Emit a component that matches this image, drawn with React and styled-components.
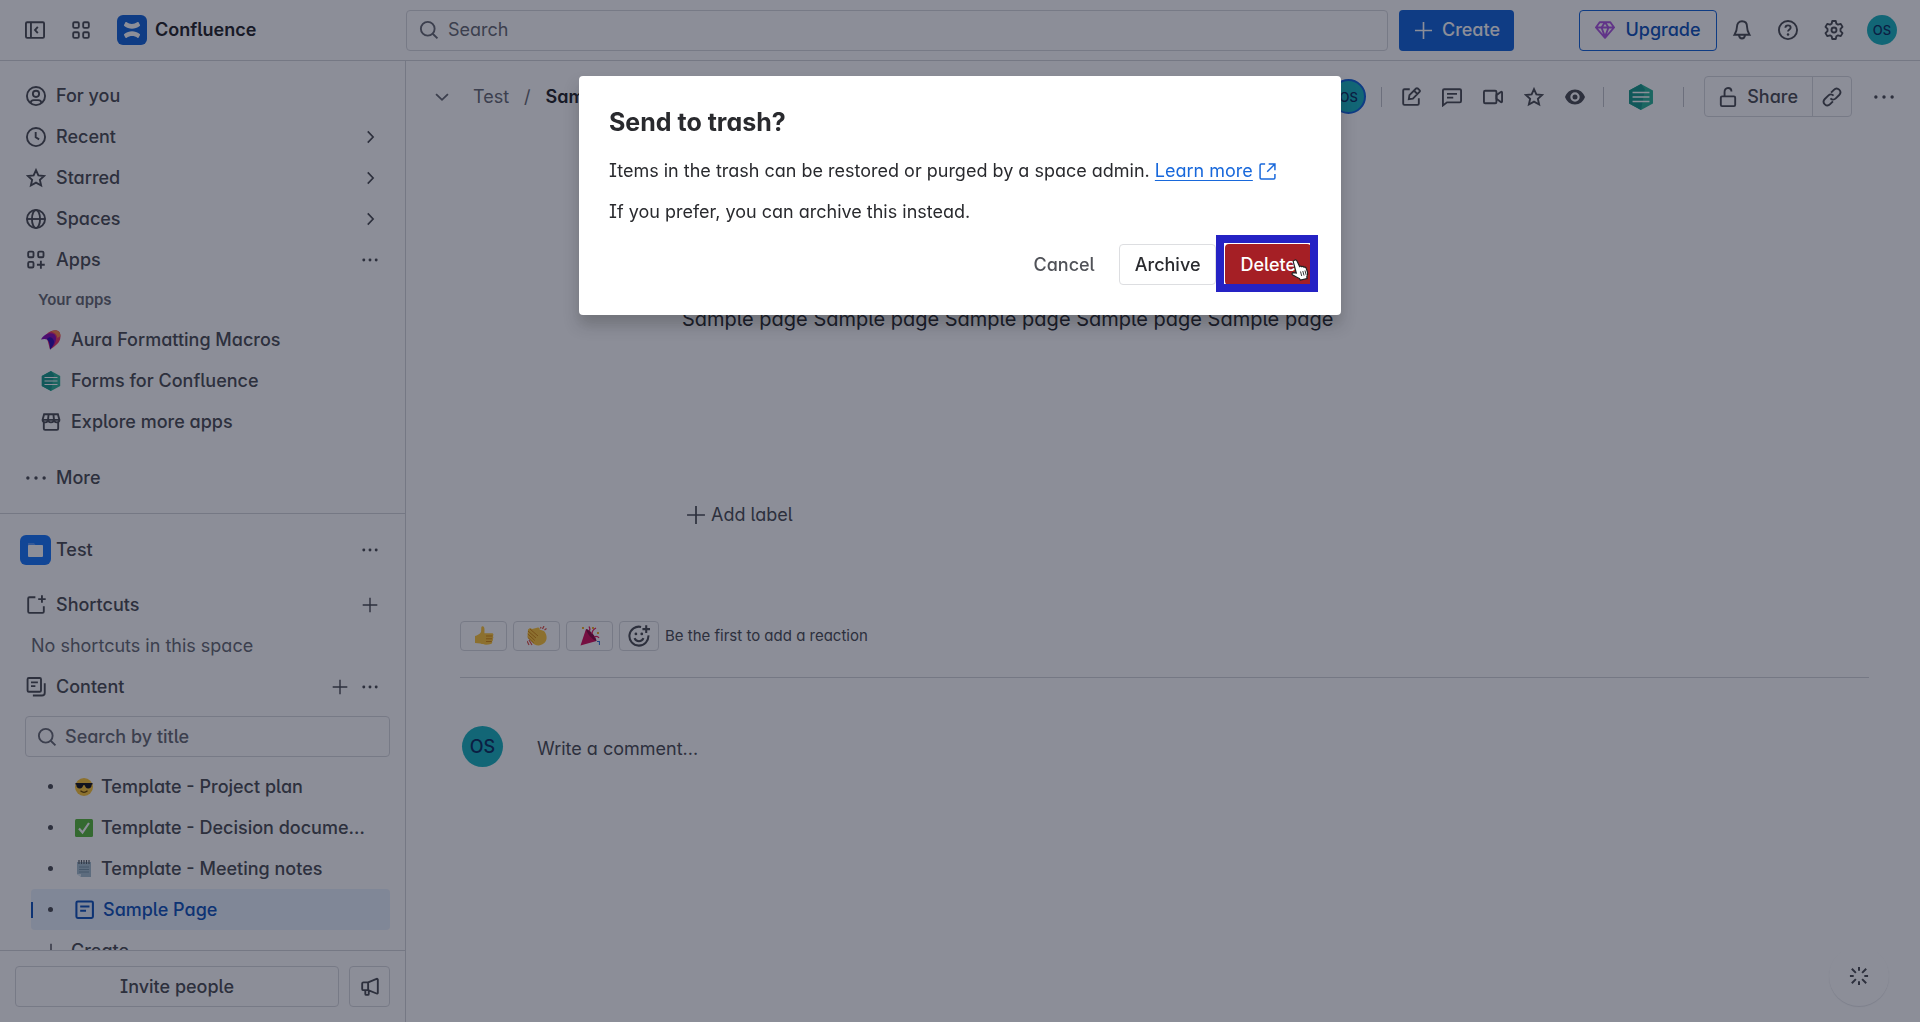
import React from 'react'
import styled, { createGlobalStyle, css } from 'styled-components'

const Icon = ({ size = 20, weight = 1.5, children }) => (
    <Svg width={size} height={size} viewBox="0 0 16 16" strokeWidth={weight} aria-hidden="true">
        {children}
    </Svg>
)

const PanelIcon = () => (
    <Icon>
        <rect x="0.75" y="1.75" width="14.5" height="12.5" rx="1" />
        <path d="M4.75 1.75v12.5M10.25 5.5 8 8l2.25 2.5" />
    </Icon>
)
const GridIcon = () => (
    <Icon>
        <rect x="1.75" y="1.75" width="4.5" height="4.5" rx="1" />
        <rect x="9.75" y="1.75" width="4.5" height="4.5" rx="1" />
        <rect x="1.75" y="9.75" width="4.5" height="4.5" rx="1" />
        <rect x="9.75" y="9.75" width="4.5" height="4.5" rx="1" />
    </Icon>
)
const PersonIcon = () => (
    <Icon>
        <circle cx="8" cy="8" r="7.25" />
        <circle cx="8" cy="6.25" r="2.5" />
        <path d="M3.75 13.6c0-1.6 1-2.35 2.5-2.35h3.5c1.5 0 2.5.75 2.5 2.35" />
    </Icon>
)
const ClockIcon = () => (
    <Icon>
        <circle cx="8" cy="8" r="7.25" />
        <path d="M7.75 4v4.25l2.75 1.65" />
    </Icon>
)
const StarIcon = () => (
    <Icon>
        <path d="m8 1.7 1.9 4.2 4.6.5-3.4 3.1 1 4.5L8 11.7 3.9 14l1-4.5L1.5 6.4l4.6-.5z" />
    </Icon>
)
const GlobeIcon = () => (
    <Icon>
        <circle cx="8" cy="8" r="7.25" />
        <ellipse cx="8" cy="8" rx="3.25" ry="7.25" />
        <path d="M.75 8h14.5" />
    </Icon>
)
const AppsIcon = () => (
    <Icon>
        <rect x="1.75" y="1.25" width="4.25" height="4.5" rx="1" />
        <rect x="9.75" y="1.25" width="4.25" height="4.5" rx="1" />
        <rect x="1.75" y="9.5" width="4.25" height="4.5" rx="1" />
        <path d="M11.9 8.5V15M8.75 11.75H15" />
    </Icon>
)
const StoreIcon = () => (
    <Icon>
        <path d="M2.25 8.25v5c0 .6.4 1 1 1h9.5c.6 0 1-.4 1-1v-5M2.5 1.75h11l1.25 4.5c0 1.2-.9 2-2.1 2s-2.25-.8-2.25-2c0 1.2-1.2 2-2.4 2s-2.4-.8-2.4-2c0 1.2-1.05 2-2.25 2s-2.1-.8-2.1-2zM5.6 6.25l.5-4.5M10.4 6.25l-.5-4.5M1.25 6.25h13.5" />
    </Icon>
)
const DotsIcon = ({ size = 20, spread = 6.5, r = 1.35 }) => (
    <Icon size={size}>
        <g fill="currentColor" stroke="none">
            <circle cx={8 - spread} cy="8" r={r} />
            <circle cx="8" cy="8" r={r} />
            <circle cx={8 + spread} cy="8" r={r} />
        </g>
    </Icon>
)
const ChevronIcon = ({ down }) => (
    <Icon size={down ? 20 : 18}>
        <path d={down ? 'm3.25 5.75 4.75 4.5 4.75-4.5' : 'M6 3l4.75 5L6 13'} />
    </Icon>
)
const PlusIcon = ({ size = 18 }) => (
    <Icon size={size} weight={1.25}>
        <path d="M8 1.5v13M1.5 8h13" />
    </Icon>
)
const ShortcutIcon = () => (
    <Icon>
        <path d="M7.5 1.75H2.75c-.6 0-1 .4-1 1v10.5c0 .6.4 1 1 1h10.5c.6 0 1-.4 1-1V9M12.75.25v6M9.75 3.25h6" />
    </Icon>
)
const PagesIcon = () => (
    <Icon>
        <rect x="1.25" y="0.75" width="10.75" height="11" rx="1" />
        <path d="M4 4.25h5.5M4 7.25h3.5M5.5 14.75h7.25c1.4 0 2.25-1 2.25-2.25V5" />
    </Icon>
)
const SearchIcon = () => (
    <Icon>
        <circle cx="7" cy="7" r="5.5" />
        <path d="m11 11 3.75 3.75" />
    </Icon>
)
const PageIcon = () => (
    <Icon size={22}>
        <rect x="1.75" y="1.75" width="12" height="12" rx="1" />
        <path d="M4.5 5.5h6.75M4.5 8.5h4.25" />
    </Icon>
)
const MegaphoneIcon = () => (
    <Icon>
        <path d="M6.5 4.25 13.25 1.5c.6-.2 1 .1 1 .7v10.3c0 .6-.5.9-1 .7L6.5 10.5zM6.5 4.25H2.75c-.6 0-1 .4-1 1V9.5c0 .6.4 1 1 1H6.5M4.25 10.5v3c0 .5.3.75.75.75h1.25c.5 0 .75-.3.75-.75v-2.75" />
    </Icon>
)
const BellIcon = () => (
    <Icon>
        <path d="M8 1C5.4 1 4 2.9 4 5.250c0 3-.6 4.300-2 6.500h12c-1.400-2.200-2-3.500-2-6.500C12 2.900 10.600 1 8 1zM5.500 12c.3 1.800 1.200 2.750 2.500 2.750s2.200-.95 2.500-2.750" />
    </Icon>
)
const HelpIcon = () => (
    <Icon>
        <circle cx="8" cy="8" r="7.25" />
        <path d="M5.9 6.25C5.9 5 6.8 4.25 8 4.25s2.1.75 2.1 1.85C10.1 7.5 8 7.6 8 9.25" />
        <circle cx="8" cy="11.5" r="1" fill="currentColor" stroke="none" />
    </Icon>
)
const GearIcon = () => (
    <Icon>
        <path d="m6.6.8h2.8l.5 2.200 1.300.7 2.200-.6 1.400 2.400-1.600 1.600v1.800l1.600 1.600-1.400 2.400-2.200-.6-1.300.7-.5 2.200H6.600l-.5-2.200-1.300-.7-2.200.6-1.400-2.400 1.600-1.600V7.100L1.200 5.500l1.400-2.400 2.200.6L6.100 3z" strokeLinejoin="round" />
        <circle cx="8" cy="8" r="2" />
    </Icon>
)
const GemIcon = () => (
    <Icon>
        <path d="M3.75 1.75h8.5l3 4.25L8 14.25.75 6zM.75 6h14.5M5.2 6 8 13.5 10.8 6 8 1.75z" strokeLinejoin="round" />
    </Icon>
)
const EditIcon = () => (
    <Icon>
        <path d="M7 1.75H2.75c-.6 0-1 .4-1 1v10.5c0 .6.4 1 1 1h10.5c.6 0 1-.4 1-1V9" />
        <path d="m6.25 9.75.5-3.25 5.3-5.3c.4-.4 1-.4 1.4 0l1.35 1.35c.4.4.4 1 0 1.4L9.5 9.25zM10.5 3 13 5.5" />
    </Icon>
)
const CommentIcon = () => (
    <Icon>
        <path d="M.75 14.75v-12c0-.6.4-1 1-1h12.5c.6 0 1 .4 1 1v8.5c0 .6-.4 1-1 1H4zM4 5.5h8M4 8.5h5" />
    </Icon>
)
const VideoIcon = () => (
    <Icon>
        <rect x="0.75" y="3" width="10" height="10" rx="1" />
        <path d="m10.75 6.5 3.5-2.5c.4-.3 1-.1 1 .4v7.2c0 .5-.6.7-1 .4l-3.5-2.5z" />
    </Icon>
)
const EyeIcon = () => (
    <Icon>
        <path fill="currentColor" stroke="none" fillRule="evenodd" d="M8 2c3.8 0 6.7 2.5 8 6-1.3 3.5-4.2 6-8 6s-6.7-2.5-8-6c1.3-3.5 4.2-6 8-6zm0 2.25a3.75 3.75 0 1 0 0 7.5 3.75 3.75 0 0 0 0-7.5z" />
        <circle cx="8" cy="8" r="2" fill="currentColor" stroke="none" />
    </Icon>
)
const UnlockIcon = () => (
    <Icon>
        <rect x="2.25" y="7.5" width="11.5" height="7.75" rx="1" />
        <path d="M5.25 7.5V4c0-1.8 1-3.25 2.75-3.25S10.75 2 10.75 3.5" />
    </Icon>
)
const LinkIcon = () => (
    <Icon>
        <path d="M7.25 4.5 9.5 2.25c1.3-1.3 3-1.3 4.25-.1 1.2 1.2 1.2 3 0 4.25L11 9.1C9.7 10.4 8 10.4 6.75 9.1M8.75 11.5 6.5 13.75c-1.3 1.3-3 1.3-4.25.1-1.2-1.2-1.2-3 0-4.25L5 6.9C6.3 5.6 8 5.6 9.25 6.9" />
    </Icon>
)
const AddEmojiIcon = () => (
    <Icon size={22}>
        <path d="M9.5 1.4A6.9 6.9 0 1 0 14.8 7.5M4.75 9.5c.6 1.5 1.8 2.25 3.25 2.25s2.6-.75 3.25-2.25M13.25.25v5.5M10.5 3H16" />
        <circle cx="5.75" cy="6.5" r="1" fill="currentColor" stroke="none" />
        <circle cx="10" cy="6.5" r="1" fill="currentColor" stroke="none" />
    </Icon>
)
const ExternalIcon = () => (
    <Icon size={19} weight={1.25}>
        <path d="M6 1.75H2.75c-.6 0-1 .4-1 1v10.5c0 .6.4 1 1 1h10.5c.6 0 1-.4 1-1V10M9 1.75h5.25V7M14.25 1.75l-6.5 6.5" />
    </Icon>
)
const SparkIcon = () => (
    <Icon weight={1.6}>
        <path d="M8 .75v3M8 12.25v3M.75 8h3M12.25 8h3M2.25 2.25 5.5 5.5M10.5 10.5l3.25 3.25M2.25 13.75l3.25-3.25M10.5 5.5l3.25-3.25" />
    </Icon>
)
const ConfluenceLogo = () => (
    <svg width="30" height="30" viewBox="0 0 30 30" aria-hidden="true">
        <rect width="30" height="30" rx="6" fill="#1868db" />
        <path fill="#fff" d="M9.3 7.1c3.6 2.5 7.4 2.5 11.3 0 .4-.3.9-.1 1.1.3l1.3 2.7c.2.4 0 .8-.3 1-4.8 3.5-10.7 3.5-15.4 0-.4-.2-.5-.6-.3-1l1.3-2.7c.2-.4.7-.5 1-.3zM20.7 22.9c-3.6-2.5-7.4-2.5-11.3 0-.4.3-.9.1-1.1-.3L7 19.9c-.2-.4 0-.8.3-1 4.8-3.5 10.7-3.5 15.4 0 .4.2.5.6.3 1l-1.3 2.7c-.2.4-.6.5-1 .3z" />
    </svg>
)
const SpaceLogo = () => (
    <svg width="32" height="30" viewBox="0 0 32 30" aria-hidden="true">
        <rect width="31" height="30" rx="6" fill="#1d7afc" />
        <path fill="#5c9dff" d="M8 8h6l1.5 2H23v5H8z" />
        <rect x="8" y="10" width="15" height="12" rx="1" fill="#fff" />
    </svg>
)
const AuraLogo = () => (
    <svg width="20" height="20" viewBox="0 0 20 20" aria-hidden="true">
        <path d="M5 4.5C9 1 13-.2 16 .6c3.5 1 4 5 3 8.9-1.2 4-6 7.5-10 10z" fill="#f0386b" />
        <path d="M10 1.5C14-.5 19.5 0 19.5 6l-3 2C16 4.5 13.5 2.5 10 1.5z" fill="#ff8a4c" />
        <path d="M0 9.5C3 4 9 2 13 4c3 2 2.5 7 0 11l-4 4.5C9 15 8.500 11.500 6 9.500 4 8.500 2 9 0 9.500z" fill="#8a12b8" />
        <path d="M6 9c2-3 6-2 7 2 .3 3-2 6.500-4 8.500C9 15 8.500 11.500 6 9z" fill="#3410b4" />
    </svg>
)
const FormsLogo = ({ size = 20 }) => (
    <svg width={size} height={size} viewBox="0 0 20 20" aria-hidden="true">
        <path d="M10 0l9.2 5v10L10 20 .8 15V5z" fill="#2fb59a" />
        <path d="M10 0 .8 5v10l9.2 5 3-16z" fill="#1c9c8c" />
        <path d="M3.5 6.5h13M3.5 10h13M3.5 13.5h13" stroke="#fff" strokeWidth="1.2" />
    </svg>
)
const CoolEmoji = () => (
    <svg width="18" height="18" viewBox="0 0 18 18" aria-hidden="true">
        <circle cx="9" cy="9" r="9" fill="#ffc93c" />
        <path d="M.5 5h17v1.2l-.8.6c-.2 2.6-1.2 3.7-3.5 3.7-2.2 0-2.9-1.3-3.4-3.2H8.2c-.5 1.9-1.2 3.2-3.4 3.2-2.3 0-3.3-1.1-3.5-3.7L.5 6.2z" fill="#1d1d20" />
        <path d="M5.5 12.8c2 1.7 5 1.7 7 0" fill="none" stroke="#664500" strokeWidth="1.2" />
    </svg>
)
const CheckEmoji = () => (
    <svg width="18" height="18" viewBox="0 0 18 18" aria-hidden="true">
        <rect width="18" height="18" rx="1.5" fill="#5dbb3f" />
        <path d="m4 9.5 3.5 4L14 4" fill="none" stroke="#fff" strokeWidth="2.2" />
    </svg>
)
const NoteEmoji = () => (
    <svg width="18" height="18" viewBox="0 0 18 18" aria-hidden="true">
        <path d="M2 2h14v15H6l-4-3z" fill="#a9c1cf" />
        <path d="M2 14l4 3v-3z" fill="#dce8ee" />
        <path d="M4 0v4M6.5 0v4M9 0v4M11.5 0v4M14 0v4" stroke="#5b646c" strokeWidth="1.2" />
        <path d="M4 7h10M4 9.5h10M4 12h10" stroke="#7f9aab" />
    </svg>
)
const ThumbEmoji = () => (
    <svg width="20" height="20" viewBox="0 0 20 20" aria-hidden="true">
        <path d="M1 10c2-.5 5-2 6-4 .4-1.5 0-4 .5-5.2C8.300-.3 10 .4 10.300 2c.4 2 0 4 .2 5.300H18c1.600 0 1.900 2 .7 2.700 1 .8.900 2.300-.2 2.800.8.900.6 2.200-.5 2.600.6.900.2 2.300-1.200 2.600-3 .9-7.500 1-10.300-.5L1 17z" fill="#ffc83d" />
        <path d="M12 10h6.5M12 12.8h6.3M12 15.5h5.7" stroke="#d98c15" />
    </svg>
)
const ClapEmoji = () => (
    <svg width="20" height="20" viewBox="0 0 20 20" aria-hidden="true">
        <path d="M1 3.5 3 2l2 1 6-1.5c1.5 0 2 1 1.5 2L17 5c2 2 3 5 2.5 8-1 4-4 6-8 6.5-3 0-5-1.5-7-4L.5 11z" fill="#ffc83d" />
        <path d="m1 5 8 7M.8 8l7 6.500M.8 11.500l6 5.500M3 3l8 7" stroke="#d98c15" fill="none" />
        <path d="M14 1l-.5 1.500M17 0l-1.500 3M19.500 2.500 17.500 4M0 15l2 4M2 14l3 5" stroke="#e2574c" strokeWidth="1.2" />
    </svg>
)
const PartyEmoji = () => (
    <svg width="20" height="20" viewBox="0 0 20 20" aria-hidden="true">
        <path d="M6 3 16.5 15 .5 19.5z" fill="#d6165e" />
        <path d="M6 3c3 0 10 7 10.5 12-4-1-9.5-7-10.5-12z" fill="#8c0f45" />
        <path d="M9 5c1-1 1-3 0-4.5M12 8c0-3 2-5 4-6M14 11c2-1 4-.5 5 1" stroke="#e91e63" strokeWidth="1.3" fill="none" />
        <g fill="#f5b52e">
            <rect x="2" y="1" width="2" height="2" />
            <rect x="12" y="1" width="2" height="2" />
            <rect x="17" y="6" width="2" height="2" />
        </g>
        <path d="M17 15.5h2.5V19" stroke="#3f7fd9" strokeWidth="1.2" fill="none" />
    </svg>
)
const HandCursor = () => (
    <CursorSvg width="20" height="22" viewBox="0 0 20 22" aria-hidden="true">
        <path
            d="M4.5 1.2c1-.6 2-.1 2.5.9l2.6 5.4c.7-.6 1.7-.5 2.2.2.8-.6 1.8-.4 2.2.5.9-.4 1.8 0 2.1.9l1.3 3.7c.7 2 .2 3.7-.6 5l.3 1.8-6.8 1.4-.9-1.5c-2-.6-4.5-2.3-6.9-3.7-1-.7-.4-2.1.8-2.1l3 .4L3.4 3.2c-.4-.8 0-1.6 1.1-2z"
            fill="#fff"
            stroke="#222"
            strokeWidth="1.2"
        />
        <path d="m10.5 12.5 1.2 4.500M12.800 12l1.200 4.500M15 11.500l1.100 4.300" stroke="#222" strokeWidth="0.9" />
    </CursorSvg>
)

const SmallDots = () => <DotsIcon size={18} spread={5.5} r={1.3} />

const mainLinks = [
    { label: 'For you', icon: <PersonIcon /> },
    { label: 'Recent', icon: <ClockIcon />, end: <ChevronIcon /> },
    { label: 'Starred', icon: <StarIcon />, end: <ChevronIcon /> },
    { label: 'Spaces', icon: <GlobeIcon />, end: <ChevronIcon /> },
    { label: 'Apps', icon: <AppsIcon />, end: <SmallDots /> },
]

const appLinks = [
    { label: 'Aura Formatting Macros', icon: <AuraLogo /> },
    { label: 'Forms for Confluence', icon: <FormsLogo /> },
    { label: 'Explore more apps', icon: <StoreIcon /> },
]

const pages = [
    { label: 'Template - Project plan', icon: <CoolEmoji /> },
    { label: 'Template - Decision documentation', icon: <CheckEmoji /> },
    { label: 'Template - Meeting notes', icon: <NoteEmoji /> },
    { label: 'Sample Page', icon: <PageIcon />, selected: true },
]

const Header = () => (
    <TopBar>
        <Brand>
            <IconButton aria-label="Collapse sidebar"><PanelIcon /></IconButton>
            <IconButton aria-label="Switch apps"><GridIcon /></IconButton>
            <Home href="#home">
                <ConfluenceLogo />
                Confluence
            </Home>
        </Brand>
        <SearchBox $grow>
            <SearchIcon />
            <input type="text" placeholder="Search" aria-label="Search" />
        </SearchBox>
        <CreateButton>
            <PlusIcon size={21} />
            Create
        </CreateButton>
        <Account>
            <UpgradeButton>
                <Gem><GemIcon /></Gem>
                Upgrade
            </UpgradeButton>
            <HeaderIcons>
                <IconButton aria-label="Notifications"><BellIcon /></IconButton>
                <IconButton aria-label="Help"><HelpIcon /></IconButton>
                <IconButton aria-label="Settings"><GearIcon /></IconButton>
            </HeaderIcons>
            <Avatar $size={30}>OS</Avatar>
        </Account>
    </TopBar>
)

const NavItem = ({ item, nested }) => (
    <NavRow $nested={nested}>
        <NavLink href="#nav">
            <Slot>{item.icon}</Slot>
            <Label>{item.label}</Label>
        </NavLink>
        {item.end && <RowButton aria-label={`${item.label} options`}>{item.end}</RowButton>}
    </NavRow>
)

const Sidebar = () => (
    <Side>
        <SideScroll>
            <NavGroup>
                {mainLinks.map((item) => <NavItem key={item.label} item={item} />)}
                <GroupTitle>Your apps</GroupTitle>
                {appLinks.map((item) => <NavItem key={item.label} item={item} nested />)}
                <MoreGroup>
                    <NavItem item={{ label: 'More', icon: <DotsIcon /> }} />
                </MoreGroup>
            </NavGroup>
            <SpaceGroup>
                <SpaceRow>
                    <NavItem item={{ label: 'Test', icon: <SpaceLogo />, end: <SmallDots /> }} />
                </SpaceRow>
                <NavItem item={{ label: 'Shortcuts', icon: <ShortcutIcon />, end: <PlusIcon /> }} />
                <EmptyText>No shortcuts in this space</EmptyText>
                <NavRow>
                    <NavLink href="#content">
                        <Slot><PagesIcon /></Slot>
                        <Label>Content</Label>
                    </NavLink>
                    <RowButton aria-label="Create content"><PlusIcon /></RowButton>
                    <RowButton aria-label="Content options"><SmallDots /></RowButton>
                </NavRow>
                <TreeSearch>
                    <SearchIcon />
                    <input type="text" placeholder="Search by title" aria-label="Search by title" />
                </TreeSearch>
                {pages.map((page) => (
                    <PageRow key={page.label} href="#page" $selected={page.selected}>
                        <Bullet />
                        <PageGlyph>{page.icon}</PageGlyph>
                        <Label>{page.label}</Label>
                    </PageRow>
                ))}
                <NavItem nested item={{ label: 'Create', icon: <PlusIcon /> }} />
            </SpaceGroup>
        </SideScroll>
        <SideFooter>
            <OutlineButton $grow>Invite people</OutlineButton>
            <OutlineButton $square aria-label="What's new"><MegaphoneIcon /></OutlineButton>
        </SideFooter>
    </Side>
)

const Toolbar = () => (
    <PageBar>
        <Crumbs>
            <IconButton aria-label="Expand"><ChevronIcon down /></IconButton>
            <a href="#space">Test</a>
            <span>/</span>
            <strong>Sample Page</strong>
        </Crumbs>
        <Tools>
            <Avatar $size={35} $ring>OS</Avatar>
            <Separator />
            <ToolGroup>
                <ToolButton aria-label="Edit"><EditIcon /></ToolButton>
                <ToolButton aria-label="Comments"><CommentIcon /></ToolButton>
                <ToolButton aria-label="Record video"><VideoIcon /></ToolButton>
                <ToolButton aria-label="Star"><StarIcon /></ToolButton>
                <ToolButton aria-label="Watch"><EyeIcon /></ToolButton>
            </ToolGroup>
            <Separator $tight />
            <FormsButton aria-label="Forms"><FormsLogo size={26} /></FormsButton>
            <Separator />
            <ShareGroup>
                <button>
                    <UnlockIcon />
                    Share
                </button>
                <button aria-label="Copy link"><LinkIcon /></button>
            </ShareGroup>
            <IconButton aria-label="More actions"><DotsIcon /></IconButton>
        </Tools>
    </PageBar>
)

const Page = () => (
    <Main>
        <Toolbar />
        <Article>
            <p>Sample page Sample page Sample page Sample page Sample page</p>
            <LabelButton>
                <PlusIcon size={22} />
                Add label
            </LabelButton>
        </Article>
        <Feedback>
            <Reactions>
                <Reaction aria-label="Thumbs up"><ThumbEmoji /></Reaction>
                <Reaction aria-label="Clap"><ClapEmoji /></Reaction>
                <Reaction aria-label="Celebrate"><PartyEmoji /></Reaction>
                <Reaction $small aria-label="Add reaction"><AddEmojiIcon /></Reaction>
                <span>Be the first to add a reaction</span>
            </Reactions>
            <CommentRow>
                <Avatar $size={41}>OS</Avatar>
                <input type="text" placeholder="Write a comment..." aria-label="Write a comment" />
            </CommentRow>
        </Feedback>
        <FloatButton aria-label="Quick actions"><SparkIcon /></FloatButton>
    </Main>
)

const TrashDialog = () => (
    <Blanket>
        <Dialog role="dialog" aria-modal="true" aria-labelledby="trash-title">
            <h1 id="trash-title">Send to trash?</h1>
            <p>
                Items in the trash can be restored or purged by a space admin.{' '}
                <a href="#learn"><span>Learn more</span> <ExternalIcon /></a>
            </p>
            <p>If you prefer, you can archive this instead.</p>
            <Actions>
                <CancelButton>Cancel</CancelButton>
                <ArchiveButton>Archive</ArchiveButton>
                <Highlight>
                    <DeleteButton>Delete</DeleteButton>
                    <HandCursor />
                </Highlight>
            </Actions>
        </Dialog>
    </Blanket>
)

const App = () => {
    return (
        <>
            <GlobalStyle />
            <Shell>
                <Header />
                <Body>
                    <Sidebar />
                    <Page />
                </Body>
            </Shell>
            <TrashDialog />
        </>
    )
}

export default App

const GlobalStyle = createGlobalStyle`
* {
    box-sizing: border-box;
}
body {
    margin: 0;
    background: #fff;
    color: #505258;
    font-family: Inter, "Liberation Sans", sans-serif;
    font-feature-settings: "cv11", "cv08", "cv05";
    font-size: 18px;
    line-height: 24px;
}
button, input {
    font: inherit;
    font-feature-settings: inherit;
    color: inherit;
    margin: 0;
}
button {
    display: inline-flex;
    align-items: center;
    justify-content: center;
    padding: 0;
    border: 0;
    background: none;
    cursor: pointer;
}
a {
    color: inherit;
    text-decoration: none;
}
`

const Svg = styled.svg`
fill: none;
stroke: currentColor;
flex: none;
`

const Shell = styled.div`
display: flex;
flex-direction: column;
height: 100vh;
overflow: hidden;
`

const TopBar = styled.header`
display: flex;
align-items: center;
height: 61px;
flex: none;
padding-right: 23px;
border-bottom: 1px solid #d5d6db;
`

const Brand = styled.div`
display: flex;
align-items: center;
width: 406px;
padding-left: 19px;
gap: 14px;
`

const IconButton = styled.button`
width: 32px;
height: 32px;
border-radius: 4px;
`

const Home = styled.a`
display: flex;
align-items: center;
gap: 8px;
margin-left: 6px;
color: #292a2e;
font-weight: 600;
`

const SearchBox = styled.label`
display: flex;
align-items: center;
gap: 9px;
height: 41px;
flex: ${(p) => (p.$grow ? '1' : 'none')};
min-width: 0;
padding-left: 12px;
border: 1px solid #d9dade;
border-radius: 4px;
color: #6b6e76;

input {
    flex: 1;
    min-width: 0;
    border: 0;
    padding: 0;
    background: none;
    outline: 0;
}
input::placeholder {
    color: #6b6e76;
    opacity: 1;
}
`

const TreeSearch = styled(SearchBox)`
margin: 9px 0 9px 10px;
gap: 8px;
padding-left: 11px;
`

const CreateButton = styled.button`
gap: 8px;
height: 41px;
width: 115px;
margin-left: 11px;
border-radius: 4px;
background: #1868db;
color: #fff;
font-weight: 500;
`

const Account = styled.div`
display: flex;
align-items: center;
margin-left: 65px;
`

const HeaderIcons = styled.div`
display: flex;
gap: 14px;
margin: 0 17px 0 9px;
`

const UpgradeButton = styled.button`
gap: 10px;
height: 41px;
width: 138px;
border: 1px solid #1868db;
border-radius: 4px;
color: #1558bc;
font-weight: 500;
`

const Gem = styled.span`
display: flex;
color: #af59e1;
`

const Avatar = styled.span`
display: flex;
align-items: center;
justify-content: center;
flex: none;
width: ${(p) => p.$size}px;
height: ${(p) => p.$size}px;
border-radius: 50%;
background: #1fb6c1;
color: #123263;
font-size: ${(p) => (p.$size > 40 ? 18 : 13)}px;
font-weight: 500;
${(p) => p.$ring && css`
border: 2px solid #1868db;
`}
`

const Body = styled.div`
display: flex;
flex: 1;
min-height: 0;
`

const Side = styled.nav`
display: flex;
flex-direction: column;
flex: none;
width: 406px;
border-right: 1px solid #d5d6db;
font-weight: 500;
`

const SideScroll = styled.div`
flex: 1;
min-height: 0;
overflow: hidden;
`

const NavGroup = styled.div`
padding: 14px 15px 15px;
border-bottom: 1px solid #d5d6db;
`

const MoreGroup = styled.div`
margin-top: 15px;
`

const SpaceGroup = styled.div`
padding: 15px 15px 0;
`

const SpaceRow = styled.div`
margin-bottom: 14px;
`

const NavRow = styled.div`
display: flex;
align-items: center;
height: 41px;
padding-left: ${(p) => (p.$nested ? 20 : 5)}px;
padding-right: 5px;
border-radius: 4px;
`

const NavLink = styled.a`
display: flex;
align-items: center;
flex: 1;
min-width: 0;
gap: 4px;
`

const Slot = styled.span`
display: flex;
justify-content: center;
width: 32px;
flex: none;
`

const Label = styled.span`
flex: 1;
min-width: 0;
white-space: nowrap;
overflow: hidden;
text-overflow: ellipsis;
`

const RowButton = styled.button`
width: 30px;
height: 30px;
`

const GroupTitle = styled.div`
height: 39px;
padding-left: 23px;
color: #6b6e76;
font-size: 15px;
font-weight: 600;
line-height: 39px;
`

const EmptyText = styled.div`
height: 41px;
padding-left: 16px;
color: #6b6e76;
font-weight: 400;
line-height: 41px;
`

const PageRow = styled.a`
display: flex;
align-items: center;
height: 41px;
margin-left: 16px;
padding-right: 16px;
border-radius: 4px;
${(p) => p.$selected && css`
background: linear-gradient(#1558bc, #1558bc) left center / 2px 16px no-repeat, #e9f2fe;
color: #1558bc;
`}
`

const Bullet = styled.span`
width: 5px;
height: 5px;
margin: 0 21px 0 17px;
border-radius: 50%;
background: #505258;
`

const PageGlyph = styled.span`
display: flex;
justify-content: center;
min-width: 20px;
margin-right: 7px;
`

const SideFooter = styled.div`
display: flex;
gap: 10px;
flex: none;
padding: 15px;
border-top: 1px solid #d5d6db;
`

const OutlineButton = styled.button`
flex: ${(p) => (p.$grow ? '1' : 'none')};
width: ${(p) => (p.$square ? '41px' : 'auto')};
height: 41px;
border: 1px solid #d9dade;
border-radius: 4px;
font-weight: 500;
`

const Main = styled.main`
flex: 1;
min-width: 0;
`

const PageBar = styled.div`
display: flex;
align-items: center;
justify-content: space-between;
height: 71px;
padding: 0 20px;
`

const Crumbs = styled.div`
display: flex;
align-items: center;
gap: 15px;
color: #6b6e76;

strong {
    color: #292a2e;
    font-weight: 600;
}
`

const Tools = styled.div`
display: flex;
align-items: center;
`

const Separator = styled.span`
width: 1px;
height: 20px;
margin: 0 8px 0 ${(p) => (p.$tight ? 8 : 15)}px;
background: #c4c6cc;
`

const ToolGroup = styled.div`
display: flex;
`

const ToolButton = styled.button`
width: 41px;
height: 41px;
`

const FormsButton = styled(ToolButton)`
margin-left: 8px;
margin-right: 7px;
`

const ShareGroup = styled.div`
display: flex;
height: 41px;
margin: 0 16px 0 12px;
border: 1px solid #d9dade;
border-radius: 4px;
font-weight: 500;

button {
    gap: 9px;
    padding: 0 14px 0 13px;
}
button + button {
    padding: 0 9px;
    border-left: 1px solid #d9dade;
}
`

const Article = styled.article`
max-width: 962px;
margin: 174px auto 0;

p {
    margin: 0 0 171px;
    color: #292a2e;
    font-size: 20px;
    line-height: 26px;
}
`

const LabelButton = styled.button`
gap: 4px;
height: 24px;
margin-left: 3px;
`

const Feedback = styled.section`
margin: 89px 51px 0 54px;
`

const Reactions = styled.div`
display: flex;
align-items: center;
gap: 6px;
padding-bottom: 26px;
border-bottom: 1px solid #d5d6db;
font-size: 15px;
`

const Reaction = styled.button`
width: ${(p) => (p.$small ? 40 : 47)}px;
height: 30px;
border: 1px solid #d9dade;
border-radius: 4px;
`

const CommentRow = styled.div`
display: flex;
align-items: center;
gap: 34px;
margin-top: 48px;
padding-left: 2px;

input {
    flex: 1;
    border: 0;
    padding: 4px 0 0;
    outline: 0;
    background: none;
}
input::placeholder {
    color: #505258;
    opacity: 1;
}
`

const FloatButton = styled.button`
position: fixed;
right: 31px;
bottom: 16px;
width: 60px;
height: 60px;
border-radius: 50%;
box-shadow: 0 1px 1px #e4e5e8;
`

const Blanket = styled.div`
position: fixed;
inset: 0;
display: flex;
align-items: flex-start;
justify-content: center;
padding-top: 76px;
background: rgba(5, 8, 31, 0.46);
`

const Dialog = styled.section`
width: 762px;
padding: 30px;
border-radius: 4px;
background: #fff;
box-shadow: 0 10px 15px rgba(30, 31, 33, 0.25);
color: #292a2e;

h1 {
    margin: 0 0 21px;
    font-size: 25px;
    font-weight: 700;
    line-height: 32px;
}
p {
    margin: 0 0 17px;
}
a {
    color: #1868db;
}
a span {
    text-decoration: underline;
    text-underline-offset: 3px;
}
a svg {
    vertical-align: -4px;
}
`

const Actions = styled.div`
display: flex;
justify-content: flex-end;
gap: 9px;
margin-top: 20px;
font-weight: 500;
`

const DialogButton = styled.button`
height: 41px;
padding: 0 15px;
border-radius: 4px;
`

const CancelButton = styled(DialogButton)`
color: #505258;
`

const ArchiveButton = styled(DialogButton)`
border: 1px solid #dddee1;
`

const DeleteButton = styled(DialogButton)`
background: #a51f25;
color: #fff;
`

const Highlight = styled.div`
position: relative;

&::after {
    content: "";
    position: absolute;
    inset: -9px -7px -7px -9px;
    border: 8px solid #2522c4;
}
`

const CursorSvg = styled.svg`
position: absolute;
right: 1px;
bottom: 4px;
z-index: 1;
`
